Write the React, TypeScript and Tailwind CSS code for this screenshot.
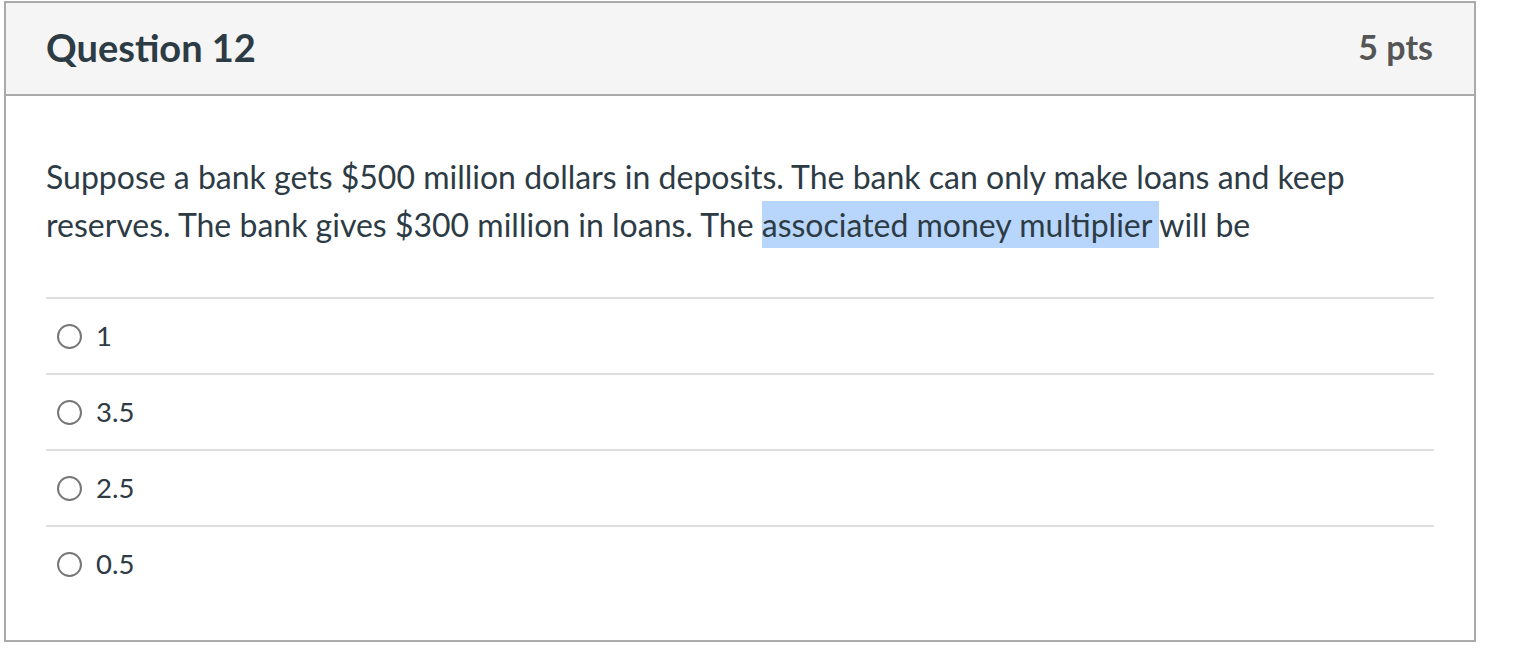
import React from "react";

const answers = ["1", "3.5", "2.5", "0.5"];

function Radio() {
  return (
    <span className="inline-block h-[25px] w-[25px] shrink-0 rounded-full border-2 border-[#777] bg-white" />
  );
}

export default function App() {
  return (
    <div className="min-h-screen bg-white pl-[4px] pt-[1px] font-['Lato','Noto_Sans',sans-serif] text-[#2d3b45]">
      <section className="w-[1472px] border-2 border-[#aaa]">
        <header className="flex h-[93px] items-center justify-between border-b-2 border-[#aaa] bg-[#f5f5f5] pl-[40px] pr-[41px]">
          <h2 className="pb-[3px] text-[38px] font-bold leading-none">Question 12</h2>
          <span className="pb-[3px] text-[34px] font-bold leading-none text-[#555]">5 pts</span>
        </header>
        <div className="px-[40px] pb-[39px] pt-[57px]">
          <p className="text-[32px] leading-[48px]">
            Suppose a bank gets $500 million dollars in deposits. The bank can only make loans and keep
            reserves. The bank gives $300 million in loans. The{" "}
            <span className="bg-[#b8d6fb] py-[4px]">associated money multiplier </span>will be
          </p>
          <div className="mt-[48px]">
            {answers.map((a) => (
              <div
                key={a}
                className="flex h-[76px] items-center gap-[14px] border-t-2 border-[#ddd] pl-[11px]"
              >
                <Radio />
                <span className="pb-[1px] text-[27.5px] leading-none">{a}</span>
              </div>
            ))}
          </div>
        </div>
      </section>
    </div>
  );
}
